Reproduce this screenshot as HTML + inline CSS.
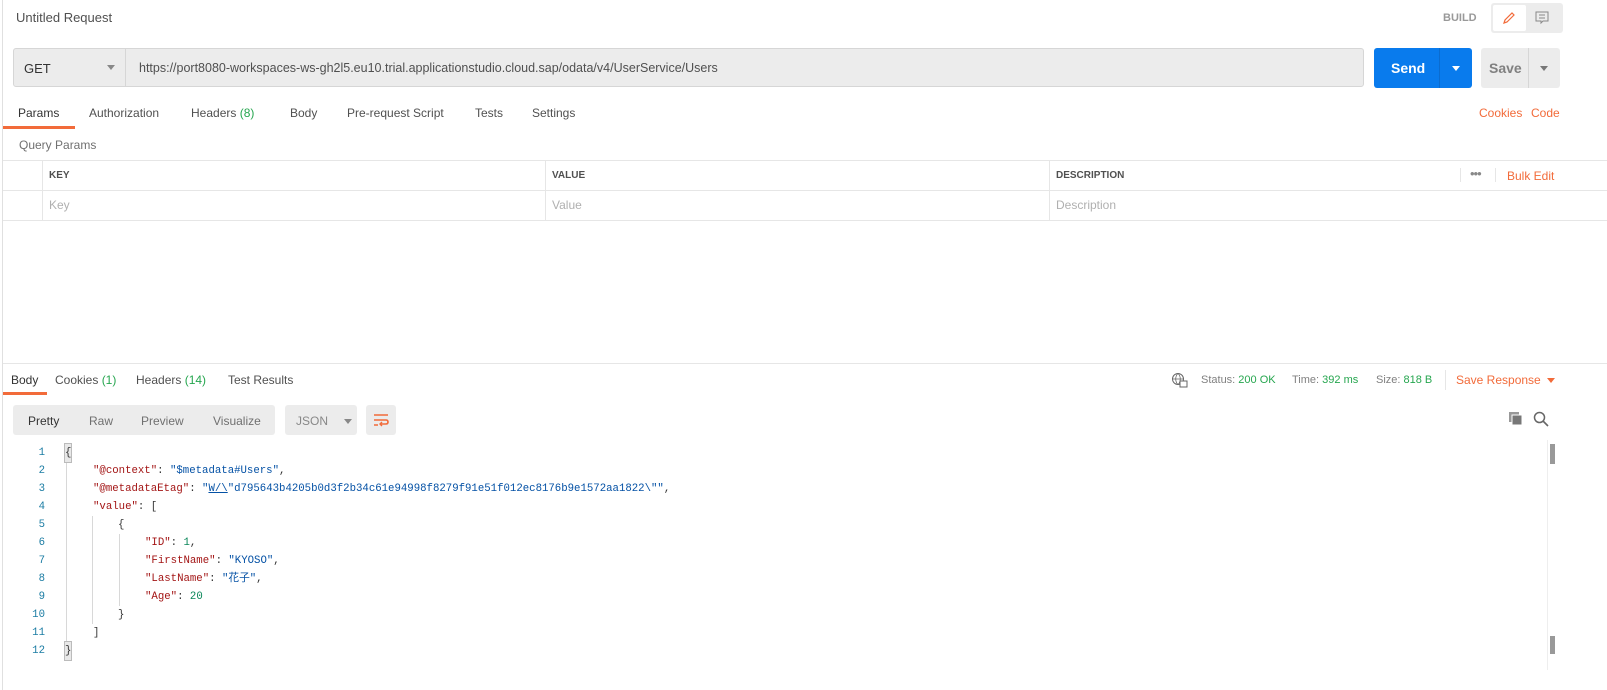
<!DOCTYPE html>
<html><head><meta charset="utf-8"><style>
*{box-sizing:border-box;margin:0;padding:0}
body{width:1607px;height:690px;background:#fff;font-family:"Liberation Sans","Noto Sans CJK JP",sans-serif;font-size:12px;color:#505050;position:relative;overflow:hidden}
.a{position:absolute;white-space:nowrap}
.g{color:#26a64f}
.o{color:#f26b3a}
.hl{position:absolute;height:1px;background:#e6e6e6}
.vl{position:absolute;width:1px;background:#e6e6e6}
.code{position:absolute;left:0;top:444px;font-family:"Liberation Mono","Noto Sans CJK JP",monospace;font-size:10.7px;line-height:18px}
.ln{position:absolute;left:0;width:45px;text-align:right;color:#1b7ca3}
.k{color:#a31515}.s{color:#0451a5}.n{color:#098658}.p{color:#333}
</style></head><body>
<div class="vl" style="left:2px;top:0;height:690px;background:#e0e0e0"></div>
<div class="a" style="left:16px;top:10px;font-size:13px;color:#505050">Untitled Request</div>
<div class="a" style="left:1443px;top:12px;font-size:11px;color:#999;font-weight:bold">BUILD</div>
<div class="a" style="left:1491px;top:3px;width:72px;height:30px;background:#ececec;border-radius:3px"></div>
<div class="a" style="left:1493px;top:5px;width:33px;height:26px;background:#fff;border-radius:2px"></div>
<svg class="a" style="left:1500px;top:9px" width="18" height="18" viewBox="0 0 18 18"><path d="M4 14 L5 11 L12 4 L14 6 L7 13 Z" fill="none" stroke="#f26b3a" stroke-width="1.2"/></svg>
<svg class="a" style="left:1533px;top:9px" width="18" height="18" viewBox="0 0 18 18"><path d="M3 3 H15 V12 H10 L8 14 V12 H3 Z M6 6 H12 M6 9 H12" fill="none" stroke="#888" stroke-width="1"/></svg>

<div class="a" style="left:13px;top:48px;width:1351px;height:39px;background:#ececec;border:1px solid #d6d6d6;border-radius:3px"></div>
<div class="vl" style="left:125px;top:49px;height:37px;background:#d6d6d6"></div>
<div class="a" style="left:24px;top:61px;font-size:13px;color:#333">GET</div>
<div class="a" style="left:107px;top:65px;width:0;height:0;border-left:4px solid transparent;border-right:4px solid transparent;border-top:5px solid #888"></div>
<div class="a" style="left:139px;top:61px;font-size:12.5px;color:#505050">https://port8080-workspaces-ws-gh2l5.eu10.trial.applicationstudio.cloud.sap/odata/v4/UserService/Users</div>

<div class="a" style="left:1374px;top:48px;width:98px;height:40px;background:#097bed;border-radius:3px"></div>
<div class="vl" style="left:1439px;top:48px;height:40px;background:#0a6cd0"></div>
<div class="a" style="left:1391px;top:60px;font-size:14px;color:#fff;font-weight:bold">Send</div>
<div class="a" style="left:1452px;top:66px;border-left:4px solid transparent;border-right:4px solid transparent;border-top:5px solid #fff"></div>
<div class="a" style="left:1481px;top:48px;width:79px;height:40px;background:#ececec;border-radius:3px"></div>
<div class="vl" style="left:1528px;top:48px;height:40px;background:#d6d6d6"></div>
<div class="a" style="left:1489px;top:60px;font-size:14px;color:#808080;font-weight:bold">Save</div>
<div class="a" style="left:1540px;top:66px;border-left:4px solid transparent;border-right:4px solid transparent;border-top:5px solid #777"></div>

<div class="a" style="left:18px;top:106px;color:#333">Params</div>
<div class="a" style="left:3px;top:126px;width:72px;height:3px;background:#f26b3a"></div>
<div class="a" style="left:89px;top:106px">Authorization</div>
<div class="a" style="left:191px;top:106px">Headers <span class="g">(8)</span></div>
<div class="a" style="left:290px;top:106px">Body</div>
<div class="a" style="left:347px;top:106px">Pre-request Script</div>
<div class="a" style="left:475px;top:106px">Tests</div>
<div class="a" style="left:532px;top:106px">Settings</div>
<div class="a o" style="left:1479px;top:106px">Cookies</div>
<div class="a o" style="left:1531px;top:106px">Code</div>

<div class="a" style="left:19px;top:138px;color:#707070">Query Params</div>
<div class="hl" style="left:3px;top:160px;width:1604px"></div>
<div class="hl" style="left:3px;top:190px;width:1604px"></div>
<div class="hl" style="left:3px;top:220px;width:1604px"></div>
<div class="vl" style="left:42px;top:160px;height:60px"></div>
<div class="vl" style="left:545px;top:160px;height:60px"></div>
<div class="vl" style="left:1049px;top:160px;height:60px"></div>
<div class="vl" style="left:1460px;top:168px;height:14px"></div>
<div class="vl" style="left:1495px;top:168px;height:14px"></div>
<div class="a" style="left:49px;top:170px;font-size:10px;font-weight:bold;color:#505050">KEY</div>
<div class="a" style="left:552px;top:170px;font-size:10px;font-weight:bold;color:#505050">VALUE</div>
<div class="a" style="left:1056px;top:170px;font-size:10px;font-weight:bold;color:#505050">DESCRIPTION</div>
<div class="a" style="left:1470px;top:166px;color:#888;font-size:13px;letter-spacing:-1px">•••</div>
<div class="a o" style="left:1507px;top:169px">Bulk Edit</div>
<div class="a" style="left:49px;top:198px;color:#b0b0b0">Key</div>
<div class="a" style="left:552px;top:198px;color:#b0b0b0">Value</div>
<div class="a" style="left:1056px;top:198px;color:#b0b0b0">Description</div>

<div class="hl" style="left:3px;top:363px;width:1604px"></div>
<div class="a" style="left:11px;top:373px;color:#333">Body</div>
<div class="a" style="left:3px;top:392px;width:44px;height:3px;background:#f26b3a"></div>
<div class="a" style="left:55px;top:373px">Cookies <span class="g">(1)</span></div>
<div class="a" style="left:136px;top:373px">Headers <span class="g">(14)</span></div>
<div class="a" style="left:228px;top:373px">Test Results</div>
<svg class="a" style="left:1171px;top:372px" width="18" height="16" viewBox="0 0 18 16"><circle cx="7" cy="7" r="5.5" fill="none" stroke="#666"/><path d="M1.5 7 H12.5 M7 1.5 C4 4 4 10 7 12.5 M7 1.5 C10 4 10 10 7 12.5" fill="none" stroke="#666" stroke-width=".8"/><rect x="9" y="9" width="7" height="6" fill="#fff" stroke="#666"/></svg>
<div class="a" style="left:1201px;top:374px;font-size:11px;color:#808080">Status: <span class="g">200 OK</span></div>
<div class="a" style="left:1292px;top:374px;font-size:11px;color:#808080">Time: <span class="g">392 ms</span></div>
<div class="a" style="left:1376px;top:374px;font-size:11px;color:#808080">Size: <span class="g">818 B</span></div>
<div class="vl" style="left:1445px;top:370px;height:20px"></div>
<div class="a o" style="left:1456px;top:373px">Save Response</div>
<div class="a" style="left:1547px;top:378px;border-left:4px solid transparent;border-right:4px solid transparent;border-top:5px solid #f26b3a"></div>

<div class="a" style="left:13px;top:405px;width:262px;height:30px;background:#ececec;border-radius:3px"></div>
<div class="a" style="left:28px;top:414px;color:#333">Pretty</div>
<div class="a" style="left:89px;top:414px;color:#707070">Raw</div>
<div class="a" style="left:141px;top:414px;color:#707070">Preview</div>
<div class="a" style="left:213px;top:414px;color:#707070">Visualize</div>
<div class="a" style="left:285px;top:405px;width:72px;height:30px;background:#ececec;border-radius:3px"></div>
<div class="a" style="left:296px;top:414px;color:#888">JSON</div>
<div class="a" style="left:344px;top:419px;border-left:4px solid transparent;border-right:4px solid transparent;border-top:5px solid #888"></div>
<div class="a" style="left:366px;top:405px;width:30px;height:30px;background:#ececec;border-radius:3px"></div>
<svg class="a" style="left:372px;top:412px" width="18" height="16" viewBox="0 0 18 16"><path d="M2 3 H16 M2 8 H14 Q16 8 16 10 Q16 12 14 12 H9 M2 13 H6" fill="none" stroke="#f26b3a" stroke-width="1.6"/><path d="M10 10 L8 12 L10 14" fill="none" stroke="#f26b3a" stroke-width="1.4"/></svg>
<svg class="a" style="left:1508px;top:411px" width="16" height="16" viewBox="0 0 16 16"><rect x="1" y="1" width="10" height="10" fill="#999"/><rect x="4" y="4" width="10" height="10" fill="#777" stroke="#fff"/></svg>
<svg class="a" style="left:1533px;top:411px" width="16" height="16" viewBox="0 0 16 16"><circle cx="6.5" cy="6.5" r="5" fill="none" stroke="#666" stroke-width="1.5"/><path d="M10 10 L15 15" stroke="#666" stroke-width="1.6"/></svg>

<div class="a" style="left:1550px;top:444px;width:5px;height:20px;background:#999"></div>
<div class="a" style="left:1550px;top:636px;width:5px;height:18px;background:#999"></div>
<div class="vl" style="left:1547px;top:440px;height:230px;background:#eee"></div>

<div class="code">
<div class="ln" style="top:0">1</div><div class="ln" style="top:18px">2</div><div class="ln" style="top:36px">3</div><div class="ln" style="top:54px">4</div><div class="ln" style="top:72px">5</div><div class="ln" style="top:90px">6</div><div class="ln" style="top:108px">7</div><div class="ln" style="top:126px">8</div><div class="ln" style="top:144px">9</div><div class="ln" style="top:162px">10</div><div class="ln" style="top:180px">11</div><div class="ln" style="top:198px">12</div>
<div class="vl" style="left:66px;top:18px;height:180px;background:#d8d8d8"></div>
<div class="vl" style="left:92px;top:72px;height:108px;background:#d8d8d8"></div>
<div class="vl" style="left:119px;top:90px;height:72px;background:#d8d8d8"></div>
<div class="a p" style="left:65px;top:0;background:#e8e8e8;outline:1px solid #bbb">{</div>
<div class="a" style="left:93px;top:18px"><span class="k">"@context"</span><span class="p">: </span><span class="s">"$metadata#Users"</span><span class="p">,</span></div>
<div class="a" style="left:93px;top:36px"><span class="k">"@metadataEtag"</span><span class="p">: </span><span class="s">"<u>W/\</u>"d795643b4205b0d3f2b34c61e94998f8279f91e51f012ec8176b9e1572aa1822\""</span><span class="p">,</span></div>
<div class="a" style="left:93px;top:54px"><span class="k">"value"</span><span class="p">: [</span></div>
<div class="a p" style="left:118px;top:72px">{</div>
<div class="a" style="left:145px;top:90px"><span class="k">"ID"</span><span class="p">: </span><span class="n">1</span><span class="p">,</span></div>
<div class="a" style="left:145px;top:108px"><span class="k">"FirstName"</span><span class="p">: </span><span class="s">"KYOSO"</span><span class="p">,</span></div>
<div class="a" style="left:145px;top:126px"><span class="k">"LastName"</span><span class="p">: </span><span class="s">"花子"</span><span class="p">,</span></div>
<div class="a" style="left:145px;top:144px"><span class="k">"Age"</span><span class="p">: </span><span class="n">20</span></div>
<div class="a p" style="left:118px;top:162px">}</div>
<div class="a p" style="left:93px;top:180px">]</div>
<div class="a p" style="left:65px;top:198px;background:#e8e8e8;outline:1px solid #bbb">}</div>
</div>
</body></html>
